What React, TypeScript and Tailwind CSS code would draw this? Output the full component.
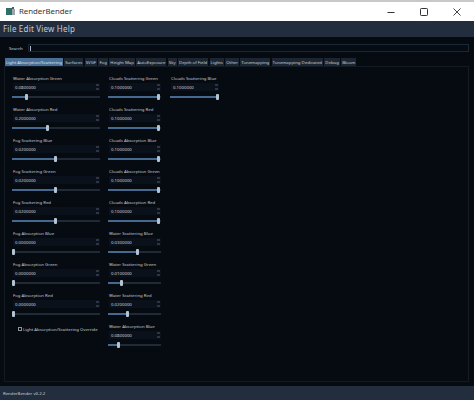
const COL_1 = [
  { label: "Water Absorption Green", value: "0.0800000", pos: 17 },
  { label: "Water Absorption Red", value: "0.2000000", pos: 40 },
  { label: "Fog Scattering Blue", value: "0.0200000", pos: 49 },
  { label: "Fog Scattering Green", value: "0.0200000", pos: 49 },
  { label: "Fog Scattering Red", value: "0.0200000", pos: 49 },
  { label: "Fog Absorption Blue", value: "0.0000000", pos: 2 },
  { label: "Fog Absorption Green", value: "0.0000000", pos: 2 },
  { label: "Fog Absorption Red", value: "0.0000000", pos: 2 },
];

const COL_2 = [
  { label: "Clouds Scattering Green", value: "0.1000000", pos: 96 },
  { label: "Clouds Scattering Red", value: "0.1000000", pos: 96 },
  { label: "Clouds Absorption Blue", value: "0.1000000", pos: 96 },
  { label: "Clouds Absorption Green", value: "0.1000000", pos: 96 },
  { label: "Clouds Absorption Red", value: "0.1000000", pos: 96 },
  { label: "Water Scattering Blue", value: "0.0300000", pos: 55 },
  { label: "Water Scattering Green", value: "0.0100000", pos: 25 },
  { label: "Water Scattering Red", value: "0.0200000", pos: 37 },
  { label: "Water Absorption Blue", value: "0.0800000", pos: 19 },
];

const COL_3 = [{ label: "Clouds Scattering Blue", value: "0.1000000", pos: 96 }];

const TABS = [
  "Light Absorption/Scattering",
  "Surfaces",
  "SVGF",
  "Fog",
  "Height Map",
  "AutoExposure",
  "Sky",
  "Depth of Field",
  "Lights",
  "Other",
  "Tonemapping",
  "Tonemapping Dedicated",
  "Debug",
  "Bloom",
];

type Item = { label: string; value: string; pos: number };

function Field({ item }: { item: Item }) {
  return (
    <div className="flex h-[31px] flex-col">
      <div className="h-[10px] text-[4.3px] leading-[10px] whitespace-nowrap text-[#c2c9d3]">{item.label}</div>
      <div className="flex h-[8px] items-center justify-between bg-[#0a111b] pr-[1px] pl-[2px] text-[4.3px] text-[#c8ced8]">
        <span>{item.value}</span>
        <span className="flex h-[6px] w-[3px] flex-col justify-between">
          <span className="h-[2px] w-[3px] bg-[#2c3644]" />
          <span className="h-[2px] w-[3px] bg-[#2c3644]" />
        </span>
      </div>
      <div className="relative mt-[3px] ml-[-1px] h-[6px]">
        <div className="absolute top-[2px] right-0 left-0 h-[2px] bg-[#222a35]" />
        <div
          className="absolute top-[2px] left-0 h-[2px] bg-[#45698f]"
          style={{ width: `${item.pos}%` }}
        />
        <div
          className="absolute top-0 h-[6px] w-[3px] rounded-[1px] bg-[#b4c3d3]"
          style={{ left: `calc(${item.pos}% - 1.5px)` }}
        />
      </div>
    </div>
  );
}

export default function App() {
  return (
    <div
      className="flex h-[400px] w-[474px] flex-col overflow-hidden bg-[#060a11]"
      style={{ fontFamily: '"Noto Sans", "Open Sans", sans-serif' }}
    >
      <div className="h-[2px] bg-[#c8c8c8]" />
      <div className="flex h-[19px] items-center justify-between bg-white pl-[6px] text-[#222]">
        <div className="flex items-center gap-[3px]">
          <svg width="10" height="9" viewBox="0 0 10 9">
            <rect x="0" y="1" width="6" height="7" fill="#2f6f66" />
            <rect x="6" y="2" width="3" height="6" fill="#9aa4ad" />
            <rect x="6" y="0" width="2" height="2" fill="#4d5963" />
          </svg>
          <span className="text-[7.8px] text-[#333]">RenderBender</span>
        </div>
        <div className="flex items-center">
          <svg width="10" height="10" viewBox="0 0 10 10" className="mr-[23px]">
            <path d="M1.5 5.5H8.5" stroke="#333" strokeWidth="1" />
          </svg>
          <svg width="10" height="10" viewBox="0 0 10 10" className="mr-[23px]">
            <rect x="1.5" y="1.5" width="7" height="7" rx="0.8" fill="none" stroke="#333" strokeWidth="1" />
          </svg>
          <svg width="10" height="10" viewBox="0 0 10 10" className="mr-[12px]">
            <path d="M1.5 1.5L8.5 8.5M8.5 1.5L1.5 8.5" stroke="#333" strokeWidth="0.9" />
          </svg>
        </div>
      </div>

      <div className="flex h-[16px] items-center bg-[#222e3e] pl-[3px] text-[8px] tracking-[0.2px] text-[#c3cad4]">
        File Edit View Help
      </div>

      <div className="flex flex-1 flex-col pt-[7px] pr-[5px] pl-[4px]">
        <div className="flex h-[8px] items-center">
          <span className="ml-[5px] w-[19px] text-[4.3px] text-[#c8ced8]">Search</span>
          <div className="flex h-[8px] flex-1 items-center border border-[#1a2836] bg-[#060c14] pl-[1px]">
            <span className="h-[5px] w-px bg-[#aeb6c2]" />
          </div>
        </div>

        <div className="mt-[6px] flex h-[8px] items-end gap-[1.35px] pl-[1px]">
          {TABS.map((tab, i) => (
            <div
              key={tab}
              className={
                i === 0
                  ? "flex h-[8px] items-center bg-[#4a6f96] px-[1px] text-[4.3px] whitespace-nowrap text-[#dde4ec]"
                  : "flex h-[8px] items-center bg-[#1c2633] px-[1px] text-[4.3px] whitespace-nowrap text-[#c8ced8]"
              }
            >
              {tab}
            </div>
          ))}
        </div>

        <div className="flex flex-1 border border-[#121a24] pt-[6px] pl-[8px]">
          <div className="flex w-[87px] flex-col">
            {COL_1.map((item) => (
              <Field key={item.label} item={item} />
            ))}
            <div className="mt-[5px] ml-[5px] flex items-center gap-[1px]">
              <span className="h-[4px] w-[4px] border border-[#8a94a0]" />
              <span className="text-[4.3px] whitespace-nowrap text-[#c2c9d3]">
                Light Absorption/Scattering Override
              </span>
            </div>
          </div>
          <div className="ml-[9px] flex w-[52px] flex-col">
            {COL_2.map((item) => (
              <Field key={item.label} item={item} />
            ))}
          </div>
          <div className="ml-[10px] flex w-[48px] flex-col">
            {COL_3.map((item) => (
              <Field key={item.label} item={item} />
            ))}
          </div>
        </div>
      </div>

      <div className="mt-[4px] flex h-[14px] items-center bg-[#222e3e] pl-[3px] text-[4.3px] text-[#c8ced8]">
        RenderBender v0.2.2
      </div>
    </div>
  );
}
